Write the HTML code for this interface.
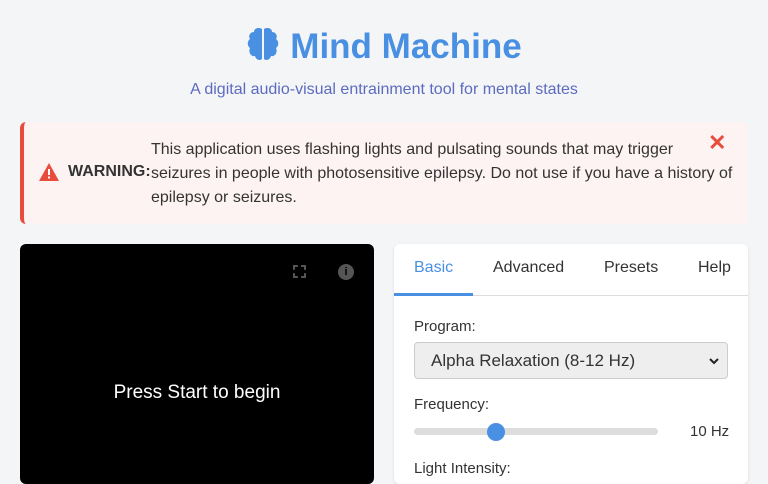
<!DOCTYPE html>
<html><head><style>
*{box-sizing:border-box;margin:0;padding:0}
body{width:768px;height:480px;overflow:hidden;background:#f4f5f7;font-family:"Liberation Sans",sans-serif;position:relative;color:#333}
h1{position:absolute;top:26px;left:0;width:768px;text-align:center;font-size:35px;font-weight:bold;color:#4a90e2}
.sub{position:absolute;top:81px;width:768px;text-align:center;font-size:16px;color:#5c6bc0}
.warn{position:absolute;left:20px;top:122px;width:728px;height:102px;background:#fdf3f2;border-left:4px solid #e74c3c;border-radius:6px}
.warn .t{position:absolute;left:127px;top:16px;width:584px;font-size:16px;line-height:24px;color:#333}
.warn b{position:absolute;left:44px;top:41px;font-size:16px;color:#333}
.x{position:absolute;left:684px;top:8px;color:#e74c3c;font-size:22px;font-weight:bold}
.vis{position:absolute;left:20px;top:244px;width:354px;height:240px;background:#000;border-radius:6px}
.vis p{position:absolute;top:138px;width:100%;text-align:center;color:#fff;font-size:19px}
.panel{position:absolute;left:394px;top:244px;width:354px;height:240px;background:#fff;border-radius:6px;box-shadow:0 1px 3px rgba(0,0,0,.1)}
.tabs{height:52px;border-bottom:1px solid #ddd;position:relative;font-size:16px}
.tabs span{position:absolute;top:15px}
.lbl{position:absolute;left:20px;font-size:15px;color:#333}
.sel{position:absolute;left:20px;top:98px;width:314px;height:37px;border:1px solid #ccc;background:#eee;border-radius:4px;font-size:17px;padding:8px 16px}
</style></head><body>
<h1><svg width="34" height="36" viewBox="0 0 34 36" style="vertical-align:-4px;margin-right:10px"><path fill="#4a90e2" d="M16 3C13 1 8 2 8 6 4 6 2 10 4 13 1 15 1 20 4 22 2 26 5 31 9 30 10 34 14 35 16 33Z M18 3C21 1 26 2 26 6 30 6 32 10 30 13 33 15 33 20 30 22 32 26 29 31 25 30 24 34 20 35 18 33Z"/></svg>Mind Machine</h1>
<div class="sub">A digital audio-visual entrainment tool for mental states</div>
<div class="warn">
<svg style="position:absolute;left:15px;top:41px" width="20" height="18" viewBox="0 0 20 18"><path d="M10 0L20 18H0Z" fill="#e74c3c"/><rect x="9" y="6" width="2" height="6" fill="#fff"/><rect x="9" y="13.5" width="2" height="2" fill="#fff"/></svg>
<b>WARNING:</b>
<div class="t">This application uses flashing lights and pulsating sounds that may trigger seizures in people with photosensitive epilepsy. Do not use if you have a history of epilepsy or seizures.</div>
<div class="x">✕</div></div>
<div class="vis">
<div style="position:absolute;left:273px;top:21px;width:13px;height:13px;border:2px dashed #555"></div>
<div style="position:absolute;left:318px;top:20px;width:16px;height:16px;border-radius:50%;background:#555;color:#000;font-size:11px;font-weight:bold;text-align:center;line-height:16px">i</div>
<p>Press Start to begin</p></div>
<div class="panel">
<div class="tabs"><span style="left:20px;color:#4a90e2">Basic</span><span style="left:99px">Advanced</span><span style="left:210px">Presets</span><span style="left:304px">Help</span>
<div style="position:absolute;left:0;bottom:-1px;width:79px;height:3px;background:#4a90e2"></div></div>
<div class="lbl" style="top:74px">Program:</div>
<div class="sel">Alpha Relaxation (8-12 Hz)<svg style="position:absolute;right:8px;top:15px" width="10" height="7" viewBox="0 0 10 7"><path d="M1 1L5 5 9 1" stroke="#222" stroke-width="2" fill="none"/></svg></div>
<div class="lbl" style="top:152px">Frequency:</div>
<div style="position:absolute;left:20px;top:184px;width:244px;height:7px;background:#ddd;border-radius:4px"></div>
<div style="position:absolute;left:93px;top:179px;width:18px;height:18px;background:#4a90e2;border-radius:50%"></div>
<div class="lbl" style="top:179px;left:296px">10 Hz</div>
<div class="lbl" style="top:216px">Light Intensity:</div>
</div>
</body></html>
